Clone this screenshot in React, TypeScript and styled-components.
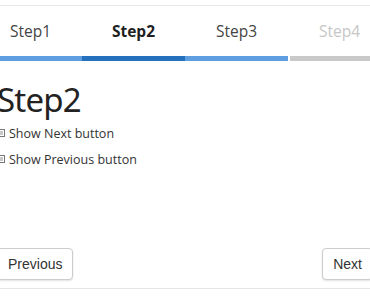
import styled, { createGlobalStyle } from 'styled-components';

const GlobalStyle = createGlobalStyle`
  html, body {
    margin: 0;
    padding: 0;
    background: #ffffff;
  }

  body {
    width: 370px;
    height: 297px;
    overflow: hidden;
  }
`;

const Page = styled.div`
  width: 370px;
  height: 297px;
  overflow: hidden;
  padding-top: 5px;
  box-sizing: border-box;
`;

const Wizard = styled.div`
  display: flex;
  flex-direction: column;
  width: 376px;
  margin-left: -3px;
  border-top: 1px solid #e8e8e8;
`;

const TabList = styled.div`
  display: flex;
  margin-left: -18px;
`;

const Tab = styled.div`
  display: flex;
  flex-direction: column;
  width: 103px;
  flex-shrink: 0;
`;

const TabLabel = styled.div<{ $state: 'done' | 'active' | 'todo' }>`
  display: flex;
  align-items: center;
  justify-content: center;
  height: 50px;
  font-family: 'Open Sans', 'Noto Sans', sans-serif;
  font-size: 15.5px;
  font-weight: ${(p) => (p.$state === 'active' ? 700 : 400)};
  color: ${(p) => (p.$state === 'todo' ? '#c6c6c6' : p.$state === 'active' ? '#1f1f1f' : '#444444')};
`;

const TabBar = styled.div<{ $state: 'done' | 'active' | 'todo' }>`
  height: 5px;
  background: ${(p) => (p.$state === 'active' ? '#2570bd' : p.$state === 'done' ? '#5e9de0' : '#c9c9c9')};
  border-left: ${(p) => (p.$state === 'todo' ? '2px solid #ffffff' : 'none')};
`;

const Body = styled.div`
  display: flex;
  flex-direction: column;
  height: 182px;
  padding-top: 19px;
  box-sizing: border-box;
`;

const Heading = styled.h1`
  margin: 0;
  font-family: 'Noto Sans', 'Open Sans', sans-serif;
  font-size: 33px;
  font-weight: 400;
  letter-spacing: -0.8px;
  line-height: 40px;
  color: #222222;
`;

const Option = styled.label`
  display: flex;
  align-items: center;
  gap: 4px;
  height: 26px;
  font-family: 'Open Sans', 'Noto Sans', sans-serif;
  font-size: 12.5px;
  color: #333333;
`;

const CheckBox = styled.span`
  width: 6px;
  height: 6px;
  border: 1px solid #777777;
  background: #c8c8c8;
  box-shadow: inset 0 0 0 1px #ffffff;
`;

const Footer = styled.div`
  display: flex;
  justify-content: space-between;
  align-items: flex-start;
  height: 46px;
  padding-top: 5px;
  box-sizing: border-box;
  border-bottom: 1px solid #e6e6e6;
`;

const Button = styled.button`
  height: 32px;
  padding: 0 10px;
  font-family: 'Liberation Sans', Arial, sans-serif;
  font-size: 14px;
  color: #333333;
  background: #ffffff;
  border: 1px solid #cccccc;
  border-radius: 4px;
  box-shadow: 0 1px 2px rgba(0, 0, 0, 0.12);
`;

const steps: { label: string; state: 'done' | 'active' | 'todo' }[] = [
  { label: 'Step1', state: 'done' },
  { label: 'Step2', state: 'active' },
  { label: 'Step3', state: 'done' },
  { label: 'Step4', state: 'todo' },
];

const App = () => {
  return (
    <Page>
      <GlobalStyle />
      <Wizard>
        <TabList>
          {steps.map((step) => (
            <Tab key={step.label}>
              <TabLabel $state={step.state}>{step.label}</TabLabel>
              <TabBar $state={step.state} />
            </Tab>
          ))}
        </TabList>
        <Body>
          <Heading>Step2</Heading>
          <Option>
            <CheckBox />
            Show Next button
          </Option>
          <Option>
            <CheckBox />
            Show Previous button
          </Option>
        </Body>
        <Footer>
          <Button>Previous</Button>
          <Button>Next</Button>
        </Footer>
      </Wizard>
    </Page>
  );
};

export default App;
